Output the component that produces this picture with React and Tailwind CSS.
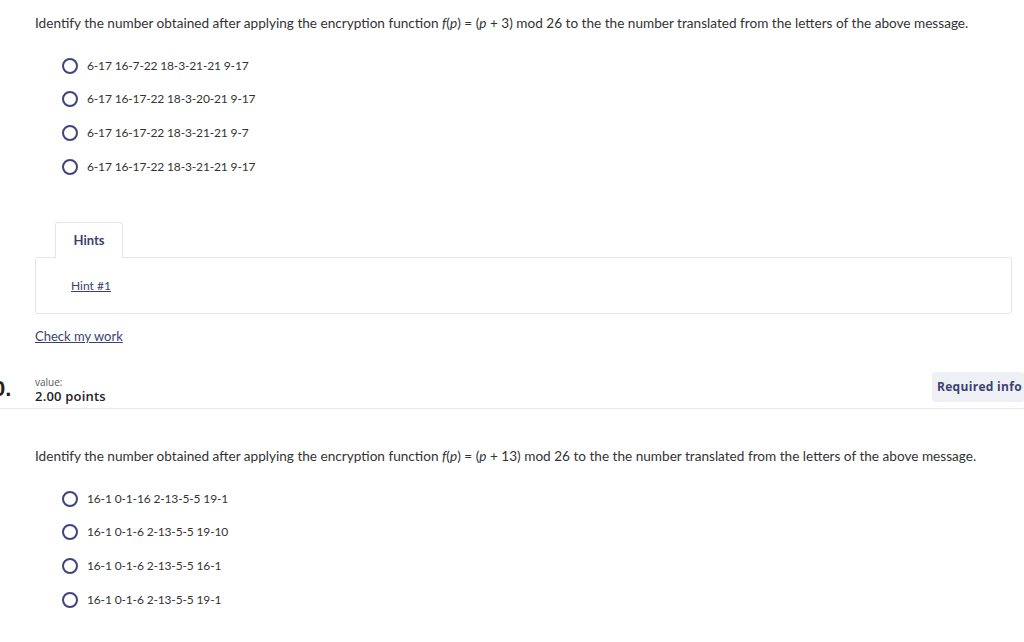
import React from 'react'

const q1 = ['6-17 16-7-22 18-3-21-21 9-17', '6-17 16-17-22 18-3-20-21 9-17', '6-17 16-17-22 18-3-21-21 9-7', '6-17 16-17-22 18-3-21-21 9-17']
const q2 = ['16-1 0-1-16 2-13-5-5 19-1', '16-1 0-1-6 2-13-5-5 19-10', '16-1 0-1-6 2-13-5-5 16-1', '16-1 0-1-6 2-13-5-5 19-1']

function Prompt({ k }) {
  return (
    <p className="text-[13.6px] text-[#333] leading-[18px] whitespace-nowrap">
      Identify the number obtained after applying the encryption function <i>f</i>(<i>p</i>) = (<i>p</i> + {k}) mod 26 to the the number translated from the letters of the above message.
    </p>
  )
}

function Options({ items }) {
  return (
    <div className="flex flex-col gap-[16.7px] pl-[27px]">
      {items.map((t, i) => (
        <label key={i} className="flex items-center gap-[9px] h-[17px]">
          <span className="w-[16px] h-[16px] rounded-full border-2 border-[#3d4480] shrink-0" />
          <span className="text-[12px] text-[#333] tracking-[-0.15px]">{t}</span>
        </label>
      ))}
    </div>
  )
}

export default function App() {
  return (
    <div className="w-[1024px] h-[642px] overflow-hidden bg-white" style={{ fontFamily: 'Lato, "Open Sans", sans-serif' }}>
      <div className="pl-[35px] pr-[12px] pt-[14px]">
        <Prompt k={3} />
        <div className="mt-[25px]">
          <Options items={q1} />
        </div>

        <div className="mt-[47px]">
          <div className="ml-[20px] w-[68px] h-[36px] border border-b-0 border-[#e6e6e6] rounded-t-[3px] bg-white relative z-10 flex items-center justify-center -mb-px">
            <span className="text-[13px] font-bold text-[#3b4270]">Hints</span>
          </div>
          <div className="h-[57px] border border-[#e6e6e6] rounded-[3px] flex items-center pl-[35px]">
            <a href="#" className="text-[12px] text-[#3b4270] underline">Hint #1</a>
          </div>
        </div>

        <a href="#" className="inline-block mt-[13px] text-[13px] text-[#3b4270] underline">Check my work</a>
      </div>

      <div className="mt-[25px] flex items-end justify-between border-b border-[#e8e8e8] pb-[4px]">
        <div className="flex items-end">
          <span className="-ml-[7px] w-[30px] text-[22px] font-bold text-[#222] leading-none mb-[4px]" style={{ fontFamily: '"Liberation Sans", sans-serif' }}>0.</span>
          <div className="ml-[12px]" style={{ fontFamily: '"Open Sans", sans-serif' }}>
            <div className="text-[10px] text-[#555] leading-[12px]">value:</div>
            <div className="text-[13px] font-semibold text-[#222] leading-[16px] tracking-[0.2px]">2.00 points</div>
          </div>
        </div>
        <div className="bg-[#eef0f5] rounded-[3px] h-[30px] pl-[5px] w-[92px] flex items-center mb-[2px] overflow-hidden whitespace-nowrap" style={{ fontFamily: '"Open Sans", sans-serif' }}>
          <span className="text-[12px] font-bold text-[#3b4270] tracking-[0.3px]">Required info</span>
        </div>
      </div>

      <div className="pl-[35px] pr-[12px] pt-[38px]">
        <Prompt k={13} />
        <div className="mt-[25px]">
          <Options items={q2} />
        </div>
      </div>
    </div>
  )
}
